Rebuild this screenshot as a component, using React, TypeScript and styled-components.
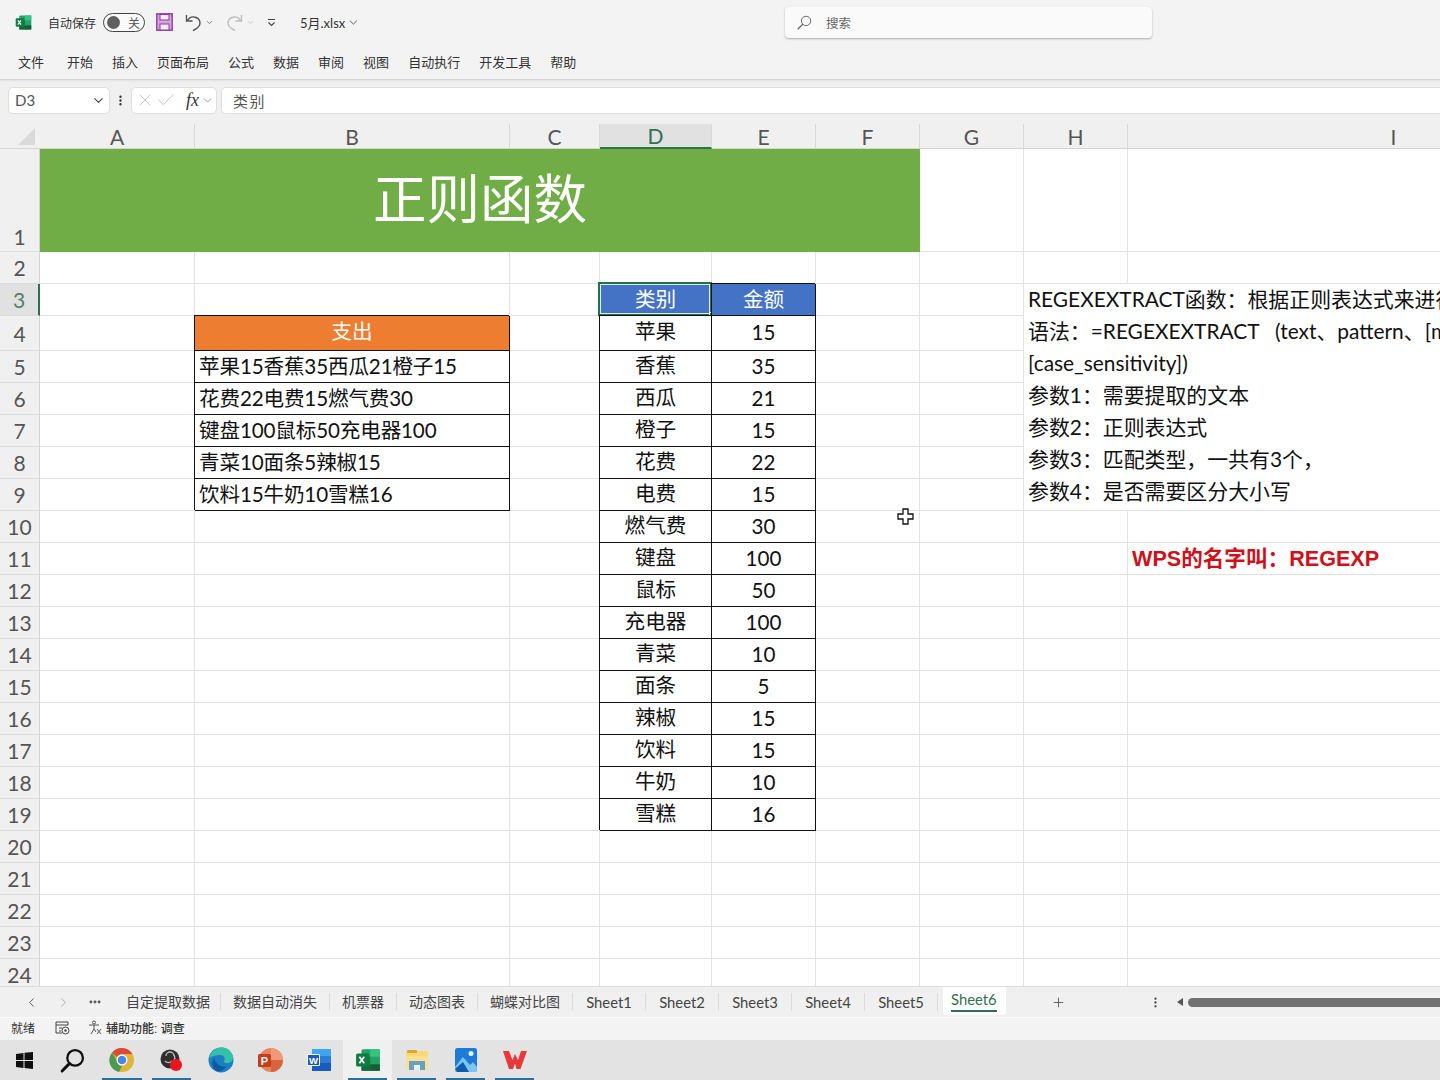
import { FC, ReactNode } from 'react';
import styled, { createGlobalStyle } from 'styled-components';
import { ChevronDown, ChevronLeft, ChevronRight, Check, X, Plus, MoreHorizontal, MoreVertical } from 'lucide-react';

const GlobalStyle = createGlobalStyle`
  html, body { margin: 0; padding: 0; background: #fff; }
  * { box-sizing: border-box; }
  body { font-family: "Liberation Sans", "Noto Sans CJK SC", sans-serif; color: #222; }
`;

const Page = styled.div`
  position: relative;
  width: 1440px;
  height: 1080px;
  overflow: hidden;
  display: flex;
  flex-direction: column;
  background: #f3f3f3;
`;

/* title bar */
const TitleBar = styled.div`
  height: 44px;
  flex: none;
  display: flex;
  align-items: center;
  padding-left: 15px;
  font-size: 12px;
  color: #333;
`;
const AutoSaveLabel = styled.span`
  margin-left: 16px;
  width: 48px;
  white-space: nowrap;
`;
const Toggle = styled.div`
  margin-left: 7px;
  width: 42px;
  height: 19px;
  border: 1px solid #444;
  border-radius: 10px;
  display: flex;
  align-items: center;
  justify-content: space-between;
  padding: 0 4px 0 3px;
  background: #fafafa;
  font-size: 12px;
  color: #555;
`;
const ToggleKnob = styled.span`
  width: 13px;
  height: 13px;
  border-radius: 50%;
  background: #5f5f5f;
`;
const QuickIcon = styled.span<{ $left: number }>`
  display: inline-flex;
  align-items: center;
  margin-left: ${(p) => p.$left}px;
`;
const FileName = styled.span`
  margin-left: 24px;
  display: inline-flex;
  align-items: center;
  gap: 2px;
  font-family: "Lato", "Noto Sans CJK SC", sans-serif;
  font-size: 13px;
  width: 60px;
  white-space: nowrap;
`;
const SearchBox = styled.div`
  margin-left: 425px;
  width: 367px;
  height: 31px;
  background: #fafafa;
  border-radius: 4px;
  box-shadow: 0 1px 2px rgba(0, 0, 0, 0.3);
  display: flex;
  align-items: center;
  gap: 14px;
  padding-left: 12px;
  font-size: 12.5px;
  color: #666;
`;

/* menu */
const MenuBar = styled.div`
  height: 36px;
  flex: none;
  display: flex;
  align-items: center;
  gap: 19px;
  padding: 0 0 0 18px;
  font-size: 13px;
  color: #333;
  border-bottom: 1px solid #d4d4d4;
  box-shadow: 0 1px 2px rgba(0, 0, 0, 0.06);
  position: relative;
`;
const MenuItem = styled.span`
  white-space: nowrap;
  &:first-child {
    margin-right: 4px;
  }
`;

/* formula bar */
const FormulaRow = styled.div`
  height: 44px;
  flex: none;
  display: flex;
  align-items: center;
  padding: 0 0 4px 8px;
  background: #f0f0f0;
`;
const FieldBox = styled.div<{ $width: number }>`
  width: ${(p) => p.$width}px;
  height: 27px;
  flex: none;
  background: #fff;
  border: 1px solid #dedede;
  border-radius: 5px;
  display: flex;
  align-items: center;
  font-family: "Lato", "Noto Sans CJK SC", sans-serif;
  font-size: 15px;
  color: #555;
`;
const NameBox = styled(FieldBox)`
  justify-content: space-between;
  padding: 0 3px 0 6px;
`;
const Dots = styled.span`
  width: 21px;
  flex: none;
  display: flex;
  justify-content: center;
  color: #333;
`;
const FxBox = styled(FieldBox)`
  padding-left: 3px;
  gap: 0;
  color: #bdbdbd;
`;
const FxMark = styled.span`
  font-family: "Liberation Serif", serif;
  font-style: italic;
  font-size: 18px;
  color: #333;
  margin-left: 9px;
  margin-right: 2px;
`;
const FormulaInput = styled(FieldBox)`
  margin-left: 4px;
  padding-left: 11px;
  border-right: none;
  border-radius: 5px 0 0 5px;
  letter-spacing: 1.5px;
`;

/* sheet */
const Sheet = styled.div`
  flex: none;
  height: 862px;
  overflow: hidden;
  display: grid;
  grid-template-columns: 40px 155px 315px 90px 112px 104px 104px 104px 104px 532px;
  grid-template-rows: 25px 103px 32px 32px 35px repeat(20, 32px);
  background: #fff;
  font-family: "Lato", "Noto Sans CJK SC", sans-serif;
  font-size: 20px;
  color: #111;
`;
const Corner = styled.div`
  background: #f0f0f0;
  position: relative;
  border-bottom: 1px solid #d4d4d4;
  &::after {
    content: '';
    position: absolute;
    right: 5px;
    bottom: 3px;
    width: 0;
    height: 0;
    border-left: 17px solid transparent;
    border-bottom: 17px solid #dadada;
  }
`;
const ColHead = styled.div<{ $active?: boolean }>`
  background: ${(p) => (p.$active ? '#e1e1e1' : '#f0f0f0')};
  border-right: 1px solid #d9d9d9;
  border-bottom: ${(p) => (p.$active ? '2px solid #2a7350' : '1px solid #d4d4d4')};
  color: ${(p) => (p.$active ? '#2f6f52' : '#555')};
  display: flex;
  align-items: center;
  justify-content: center;
  font-size: 21px;
`;
const RowHead = styled.div<{ $active?: boolean; $bottom?: boolean }>`
  background: ${(p) => (p.$active ? '#e1e1e1' : '#f0f0f0')};
  border-bottom: 1px solid #dcdcdc;
  border-right: ${(p) => (p.$active ? '2px solid #2a7350' : '1px solid #d4d4d4')};
  color: ${(p) => (p.$active ? '#4f7f69' : '#555')};
  display: flex;
  align-items: ${(p) => (p.$bottom ? 'flex-end' : 'center')};
  justify-content: center;
  padding-bottom: ${(p) => (p.$bottom ? 2 : 0)}px;
  font-size: 21px;
`;
const Cell = styled.div`
  border-right: 1px solid #e2e2e2;
  border-bottom: 1px solid #e2e2e2;
  min-width: 0;
`;
const TitleCell = styled.div`
  grid-column: span 6;
  background: #70ad47;
  color: #fff;
  font-size: 53.5px;
  display: flex;
  align-items: center;
  justify-content: center;
  padding-bottom: 11px;
`;
const TableCell = styled.div<{ $fill?: string; $left?: boolean; $lift?: number }>`
  background: ${(p) => p.$fill ?? '#fff'};
  color: ${(p) => (p.$fill ? '#fff' : '#111')};
  border-right: 1px solid #111;
  border-bottom: 1px solid #111;
  box-shadow: -1px -1px 0 #111;
  display: flex;
  align-items: center;
  justify-content: ${(p) => (p.$left ? 'flex-start' : 'center')};
  padding-left: ${(p) => (p.$left ? 4 : 0)}px;
  padding-bottom: ${(p) => p.$lift ?? 0}px;
  font-size: 20.6px;
  letter-spacing: ${(p) => (p.$left ? '-0.15px' : 0)};
  white-space: nowrap;
  position: relative;
`;
const SelectFrame = styled.span`
  position: absolute;
  inset: -2px -1px -1px -2px;
  border: 2px solid #217346;
  outline: 1px solid #d9efe4;
  outline-offset: -3px;
`;
const FillHandle = styled.span`
  position: absolute;
  right: -4px;
  bottom: -3px;
  width: 6px;
  height: 6px;
  background: #217346;
  border: 1px solid #fff;
`;
const NotesCell = styled.div`
  grid-column: span 2;
  grid-row: span 7;
  padding: 0 0 0 4px;
  border-bottom: 1px solid #e2e2e2;
  overflow: hidden;
  font-size: 20.9px;
  line-height: 32px;
  white-space: nowrap;
`;
const NoteLine = styled.div`
  height: 32px;
  margin-top: -1px;
  margin-bottom: 1px;
`;
const RedCell = styled(Cell)`
  font-family: "Liberation Sans", "Noto Sans CJK SC", sans-serif;
  color: #cf111b;
  font-weight: 700;
  font-size: 21.6px;
  padding: 0 0 4px 4px;
  white-space: nowrap;
  display: flex;
  align-items: center;
`;

/* tabs */
const TabBar = styled.div`
  height: 32px;
  flex: none;
  display: flex;
  align-items: center;
  background: #f0f0f0;
  border-top: 1px solid #dcdcdc;
  border-bottom: 1px solid #fbfbfb;
  position: relative;
  font-size: 14px;
  color: #444;
`;
const TabNav = styled.div`
  width: 114px;
  flex: none;
  display: flex;
  align-items: center;
  padding-left: 24px;
  gap: 17px;
  color: #555;
`;
const Tab = styled.span<{ $latin?: boolean }>`
  flex: none;
  padding: 0 ${(p) => (p.$latin ? 13.2 : 12)}px;
  height: 18px;
  white-space: nowrap;
  line-height: 18px;
  border-right: 1px solid #dcdcdc;
  font-family: ${(p) => (p.$latin ? '"Lato", sans-serif' : 'inherit')};
  font-size: ${(p) => (p.$latin ? 14.8 : 14)}px;
  &:first-of-type {
    padding-right: 10px;
  }
`;
const ActiveTab = styled.span`
  flex: none;
  padding: 3px 9px 0 8px;
  height: 28px;
  margin: -2px 5px 0;
  white-space: nowrap;
  line-height: 18px;
  background: #fff;
  border-radius: 0 0 4px 4px;
  color: #2f6f52;
  font-family: "Lato", sans-serif;
  font-size: 14.8px;
`;
const ActiveLine = styled.span`
  display: block;
  height: 2px;
  margin-top: 2px;
  background: #2e6f4f;
`;
const TabPlus = styled.span`
  margin-left: 40px;
  display: inline-flex;
  color: #444;
`;
const TabDots = styled.span`
  margin-left: 83px;
  display: inline-flex;
`;
const ScrollArrow = styled.span`
  margin-left: 15px;
  width: 0;
  height: 0;
  border-top: 4px solid transparent;
  border-bottom: 4px solid transparent;
  border-right: 6px solid #555;
`;
const ScrollThumb = styled.span`
  margin-left: 5px;
  flex: 1;
  height: 9px;
  border-radius: 5px 0 0 5px;
  background: #717171;
`;

/* status */
const StatusBar = styled.div`
  height: 22px;
  flex: none;
  display: flex;
  align-items: center;
  padding: 0 0 3px 11px;
  font-size: 12px;
  color: #333;
  background: #f3f3f3;
`;
const StatusItem = styled.span<{ $left?: number; $strong?: boolean }>`
  display: inline-flex;
  align-items: center;
  gap: 4px;
  margin-left: ${(p) => p.$left ?? 0}px;
  font-weight: ${(p) => (p.$strong ? 500 : 400)};
`;

/* taskbar */
const Taskbar = styled.div`
  height: 40px;
  flex: none;
  display: flex;
  background: #e3e3e3;
`;
const TaskSlot = styled.div<{ $on?: boolean; $active?: boolean; $width?: number }>`
  width: ${(p) => p.$width ?? 49}px;
  flex: none;
  display: flex;
  align-items: center;
  justify-content: center;
  background: ${(p) => (p.$active ? '#f0f0f0' : 'transparent')};
  position: relative;
  &::after {
    content: '';
    display: ${(p) => (p.$on ? 'block' : 'none')};
    position: absolute;
    left: 5px;
    right: 5px;
    bottom: 0;
    height: 2px;
    background: #2c6f9f;
  }
`;
const PointerMark = styled.svg`
  position: absolute;
  left: 897px;
  top: 508px;
`;

const ExcelIcon: FC<{ size: number }> = ({ size }) => (
  <svg width={size} height={size} viewBox="0 0 24 24">
    <rect x="6" y="2" width="17" height="20" rx="1.5" fill="#21a366" />
    <rect x="14" y="2" width="9" height="7" fill="#33c481" />
    <rect x="6" y="9" width="8" height="7" fill="#107c41" />
    <rect x="14" y="16" width="9" height="6" fill="#185c37" />
    <rect x="6" y="16" width="8" height="6" fill="#0f6b38" />
    <rect x="1" y="6" width="12" height="12" rx="1.5" fill="#107c41" />
    <path d="M4 9l4.5 6M8.5 9L4 15" stroke="#fff" strokeWidth="1.6" fill="none" />
  </svg>
);
const SaveIcon = () => (
  <svg width="17" height="18" viewBox="0 0 17 18">
    <rect x="0.8" y="0.8" width="15.4" height="16.4" fill="#d9a3e0" stroke="#8a3f97" strokeWidth="1.4" />
    <rect x="4" y="1.5" width="9" height="5.5" fill="#f6e9f8" stroke="#8a3f97" />
    <rect x="4" y="11" width="9" height="6" fill="#f6e9f8" stroke="#8a3f97" />
  </svg>
);
const UndoIcon: FC<{ color: string; flip?: boolean }> = ({ color, flip }) => (
  <svg width="17" height="19" viewBox="0 0 17 19" style={flip ? { transform: 'scaleX(-1)' } : undefined}>
    <path d="M1.5 2v6h6M2 8c2-3 4.500-4.500 7-4 3.500.6 6 3 6 6 0 3-2.500 5.500-7 7.500" fill="none" stroke={color} strokeWidth="1.4" />
  </svg>
);
const SmallChevron: FC<{ color?: string; size?: number }> = ({ color = '#555', size = 11 }) => (
  <ChevronDown size={size} color={color} strokeWidth={1.8} />
);
const CustomizeIcon = () => (
  <svg width="9" height="9" viewBox="0 0 9 9">
    <path d="M1 1.500h7M1.500 4.500L4.500 7.500 7.500 4.500" fill="none" stroke="#444" strokeWidth="1.1" />
  </svg>
);
const SearchGlyph: FC<{ size: number; color: string; width: number }> = ({ size, color, width }) => (
  <svg width={size} height={size} viewBox="0 0 24 24">
    <circle cx="14.500" cy="9.500" r="7.500" fill="none" stroke={color} strokeWidth={width} />
    <path d="M9 15L2 22" stroke={color} strokeWidth={width + 0.6} strokeLinecap="round" />
  </svg>
);
const SheetViewIcon = () => (
  <svg width="15" height="14" viewBox="0 0 15 14">
    <path d="M1 1h12v3H1zM1 4v8h6M4 7h3M4 10h2" fill="none" stroke="#444" strokeWidth="1" />
    <circle cx="10.500" cy="9.500" r="3.500" fill="none" stroke="#444" />
    <circle cx="10.500" cy="9.500" r="1.200" fill="#444" />
  </svg>
);
const AccessIcon = () => (
  <svg width="14" height="15" viewBox="0 0 14 15">
    <circle cx="6" cy="2.500" r="1.500" fill="none" stroke="#555" />
    <path d="M1 5h10M6 5v4M6 9l-3 5M6 9l2 3M9 9l4 5M13 9l-4 5" fill="none" stroke="#555" strokeWidth="1" />
  </svg>
);
const WindowsIcon = () => (
  <svg width="17" height="17" viewBox="0 0 17 17">
    <path d="M0 2l7.500-1v7H0zM8.500.8L17 0v8H8.500zM0 9h7.500v7L0 15zM8.500 9H17v8l-8.500-1z" fill="#111" />
  </svg>
);
const ChromeIcon = () => (
  <svg width="26" height="26" viewBox="0 0 26 26">
    <circle cx="13" cy="13" r="12" fill="#e0b33a" />
    <path d="M13 1a12 12 0 0 1 10.400 6H13a6 6 0 0 0-5.200 3L3.100 5.500A12 12 0 0 1 13 1z" fill="#dc4a3d" />
    <path d="M3.100 5.500L8 14a6 6 0 0 0 5 5l-3 6A12 12 0 0 1 3.100 5.500z" fill="#4c9a52" />
    <circle cx="13" cy="13" r="5.500" fill="#fff" />
    <circle cx="13" cy="13" r="4.300" fill="#4a85e8" />
  </svg>
);
const ObsIcon = () => (
  <svg width="24" height="26" viewBox="0 0 24 26">
    <circle cx="10" cy="12" r="9.500" fill="#2f2f2f" />
    <path d="M6 9a4 4 0 0 1 8 0M5 14c2 2 5 2 7 0M14 8c1 2 1 5-1 7" fill="none" stroke="#bbb" strokeWidth="1.4" />
    <circle cx="16" cy="18" r="6" fill="#f0121d" />
  </svg>
);
const EdgeIcon = () => (
  <svg width="26" height="26" viewBox="0 0 26 26">
    <circle cx="13" cy="13" r="12.500" fill="#1a7fc4" />
    <path d="M1 12C2 5 8 .5 14 .5c6 0 11 5 11 10.500 0 3-2.500 5-6 5-2 0-3.500-.6-3.500-1.500 2-1 2-6-3-6.500C8 8 3 9 1 12z" fill="#35c1a5" />
    <path d="M9 24c-5-2-6-9-3-13 1 5 6 9 12 9-2 3-6 5-9 4z" fill="#0c5b9e" />
  </svg>
);
const PptIcon = () => (
  <svg width="26" height="26" viewBox="0 0 26 26">
    <circle cx="14" cy="13" r="12" fill="#e8825f" />
    <path d="M14 1a12 12 0 0 1 12 12H14z" fill="#ee9a7b" />
    <path d="M14 25a12 12 0 0 0 12-12H14z" fill="#d9653f" />
    <rect x="1" y="7" width="13" height="13" rx="1.500" fill="#c43e1c" />
    <text x="7.500" y="17.500" textAnchor="middle" fontSize="11" fontWeight="700" fill="#fff" fontFamily="Liberation Sans">P</text>
  </svg>
);
const WordIcon = () => (
  <svg width="26" height="24" viewBox="0 0 26 24">
    <rect x="6" y="1" width="19" height="22" rx="1.500" fill="#2b7cd3" />
    <rect x="6" y="1" width="19" height="7" fill="#41a5ee" />
    <rect x="6" y="15" width="19" height="8" fill="#185abd" />
    <rect x="1" y="6" width="13" height="12" rx="1.500" fill="#fff" />
    <rect x="2" y="7" width="11" height="10" fill="#185abd" />
    <text x="7.500" y="15.500" textAnchor="middle" fontSize="9.500" fontWeight="700" fill="#fff" fontFamily="Liberation Sans">W</text>
  </svg>
);
const FolderIcon = () => (
  <svg width="24" height="24" viewBox="0 0 24 24">
    <rect x="1" y="3" width="22" height="19" rx="1.500" fill="#f8d775" />
    <rect x="2" y="2" width="10" height="3" rx="1" fill="#d9a63a" />
    <rect x="1" y="8" width="22" height="14" fill="#fae08f" />
    <rect x="4" y="13" width="16" height="9" fill="#6a9fc0" />
    <rect x="9" y="17" width="6" height="5" fill="#e9eef2" />
  </svg>
);
const PhotosIcon = () => (
  <svg width="24" height="26" viewBox="0 0 24 26">
    <rect x="1" y="1" width="22" height="24" rx="2.500" fill="#1d7bd8" />
    <circle cx="17" cy="6.500" r="2.500" fill="#eaf4fc" />
    <path d="M1 20l8-10 7 8 3-3 4 5v3a2 2 0 0 1-2 2H3a2 2 0 0 1-2-2z" fill="#7cc4f3" />
    <path d="M1 22l8-7 6 10H3z" fill="#0d5eaf" />
  </svg>
);
const WpsIcon = () => (
  <svg width="26" height="20" viewBox="0 0 26 20">
    <path d="M1 1h6l3.500 9L13 4l3 6 3-9h6l-6.500 18h-4L13 13.500 11 19H7z" fill="#e8383a" />
  </svg>
);

const colWidths = ['A', 'B', 'C', 'D', 'E', 'F', 'G', 'H', 'I'];
const expenseRows = ['苹果15香蕉35西瓜21橙子15', '花费22电费15燃气费30', '键盘100鼠标50充电器100', '青菜10面条5辣椒15', '饮料15牛奶10雪糕16'];
const amounts: [string, string][] = [
  ['苹果', '15'], ['香蕉', '35'], ['西瓜', '21'], ['橙子', '15'], ['花费', '22'], ['电费', '15'], ['燃气费', '30'], ['键盘', '100'],
  ['鼠标', '50'], ['充电器', '100'], ['青菜', '10'], ['面条', '5'], ['辣椒', '15'], ['饮料', '15'], ['牛奶', '10'], ['雪糕', '16'],
];
const notes = [
  'REGEXEXTRACT函数：根据正则表达式来进行提取',
  '语法：=REGEXEXTRACT\u00a0\u00a0\u00a0(text、pattern、[match_mode]、',
  '[case_sensitivity])',
  '参数1：需要提取的文本',
  '参数2：正则表达式',
  '参数3：匹配类型，一共有3个，',
  '参数4：是否需要区分大小写',
];
const menus = ['文件', '开始', '插入', '页面布局', '公式', '数据', '审阅', '视图', '自动执行', '开发工具', '帮助'];
const cjkTabs = ['自定提取数据', '数据自动消失', '机票器', '动态图表', '蝴蝶对比图'];
const latinTabs = ['Sheet1', 'Sheet2', 'Sheet3', 'Sheet4', 'Sheet5'];

const renderRow = (row: number): ReactNode[] => {
  const out: ReactNode[] = [
    <RowHead key={`h${row}`} $active={row === 3} $bottom={row === 1}>
      {row}
    </RowHead>,
  ];
  if (row === 1) {
    out.push(<TitleCell key="title">正则函数</TitleCell>);
    out.push(<Cell key="g1" />, <Cell key="h1" />, <Cell key="i1" />);
    return out;
  }
  colWidths.forEach((col) => {
    const key = `${col}${row}`;
    if (col === 'B' && row === 4) {
      out.push(<TableCell key={key} $fill="#ed7d31" $lift={6}>支出</TableCell>);
    } else if (col === 'B' && row >= 5 && row <= 9) {
      out.push(<TableCell key={key} $left $lift={4}>{expenseRows[row - 5]}</TableCell>);
    } else if (col === 'D' && row === 3) {
      out.push(
        <TableCell key={key} $fill="#4472c4" $lift={3}>
          类别
          <SelectFrame />
          <FillHandle />
        </TableCell>,
      );
    } else if (col === 'E' && row === 3) {
      out.push(<TableCell key={key} $fill="#4472c4" $lift={3}>金额</TableCell>);
    } else if (col === 'D' && row >= 4 && row <= 19) {
      out.push(<TableCell key={key} $lift={6}>{amounts[row - 4][0]}</TableCell>);
    } else if (col === 'E' && row >= 4 && row <= 19) {
      out.push(<TableCell key={key} $lift={2}>{amounts[row - 4][1]}</TableCell>);
    } else if (col === 'H' && row === 3) {
      out.push(
        <NotesCell key={key}>
          {notes.map((n) => (
            <NoteLine key={n}>{n}</NoteLine>
          ))}
        </NotesCell>,
      );
    } else if ((col === 'H' || col === 'I') && row >= 3 && row <= 9) {
      // covered by the notes cell
    } else if (col === 'I' && row === 11) {
      out.push(<RedCell key={key}>WPS的名字叫：REGEXP</RedCell>);
    } else {
      out.push(<Cell key={key} />);
    }
  });
  return out;
};

export default function App() {
  return (
    <Page>
      <GlobalStyle />
      <TitleBar>
        <ExcelIcon size={17} />
        <AutoSaveLabel>自动保存</AutoSaveLabel>
        <Toggle>
          <ToggleKnob />关
        </Toggle>
        <QuickIcon $left={11}><SaveIcon /></QuickIcon>
        <QuickIcon $left={12}><UndoIcon color="#555" /></QuickIcon>
        <QuickIcon $left={3}><SmallChevron size={9} /></QuickIcon>
        <QuickIcon $left={12}><UndoIcon color="#bdbdbd" flip /></QuickIcon>
        <QuickIcon $left={3}><SmallChevron size={9} color="#bbb" /></QuickIcon>
        <QuickIcon $left={12}><CustomizeIcon /></QuickIcon>
        <FileName>
          5月.xlsx
          <SmallChevron size={13} />
        </FileName>
        <SearchBox>
          <SearchGlyph size={15} color="#666" width={1.6} />
          搜索
        </SearchBox>
      </TitleBar>
      <MenuBar>
        {menus.map((m) => (
          <MenuItem key={m}>{m}</MenuItem>
        ))}
      </MenuBar>
      <FormulaRow>
        <NameBox $width={102}>
          D3
          <ChevronDown size={15} color="#444" strokeWidth={1.8} />
        </NameBox>
        <Dots><MoreVertical size={13} strokeWidth={2.4} /></Dots>
        <FxBox $width={86}>
          <X size={20} strokeWidth={1} />
          <Check size={22} strokeWidth={1} />
          <FxMark>fx</FxMark>
          <SmallChevron size={13} color="#999" />
        </FxBox>
        <FormulaInput $width={1219}>类别</FormulaInput>
      </FormulaRow>
      <Sheet>
        <Corner />
        {colWidths.map((c) => (
          <ColHead key={c} $active={c === 'D'}>{c}</ColHead>
        ))}
        {Array.from({ length: 24 }, (_, i) => renderRow(i + 1))}
      </Sheet>
      <TabBar>
        <TabNav>
          <ChevronLeft size={15} strokeWidth={1.5} />
          <ChevronRight size={15} strokeWidth={1.5} color="#aaa" />
          <MoreHorizontal size={14} strokeWidth={3} />
        </TabNav>
        {cjkTabs.map((t) => (
          <Tab key={t}>{t}</Tab>
        ))}
        {latinTabs.map((t) => (
          <Tab key={t} $latin>{t}</Tab>
        ))}
        <ActiveTab>
          Sheet6
          <ActiveLine />
        </ActiveTab>
        <TabPlus><Plus size={15} strokeWidth={1.3} /></TabPlus>
        <TabDots><MoreVertical size={13} strokeWidth={2.2} /></TabDots>
        <ScrollArrow />
        <ScrollThumb />
      </TabBar>
      <StatusBar>
        <StatusItem>就绪</StatusItem>
        <StatusItem $left={20}><SheetViewIcon /></StatusItem>
        <StatusItem $left={18} $strong>
          <AccessIcon />
          辅助功能: 调查
        </StatusItem>
      </StatusBar>
      <Taskbar>
        <TaskSlot $width={48}><WindowsIcon /></TaskSlot>
        <TaskSlot><SearchGlyph size={25} color="#111" width={2.2} /></TaskSlot>
        <TaskSlot $width={50} $on><ChromeIcon /></TaskSlot>
        <TaskSlot $on><ObsIcon /></TaskSlot>
        <TaskSlot><EdgeIcon /></TaskSlot>
        <TaskSlot><PptIcon /></TaskSlot>
        <TaskSlot><WordIcon /></TaskSlot>
        <TaskSlot $on $active><ExcelIcon size={26} /></TaskSlot>
        <TaskSlot $on><FolderIcon /></TaskSlot>
        <TaskSlot $on><PhotosIcon /></TaskSlot>
        <TaskSlot $on><WpsIcon /></TaskSlot>
      </Taskbar>
      <PointerMark width="17" height="17" viewBox="0 0 17 17">
        <path d="M6 1h5v5h5v5h-5v5H6v-5H1V6h5z" fill="#fff" stroke="#111" strokeWidth="1.3" />
      </PointerMark>
    </Page>
  );
}
